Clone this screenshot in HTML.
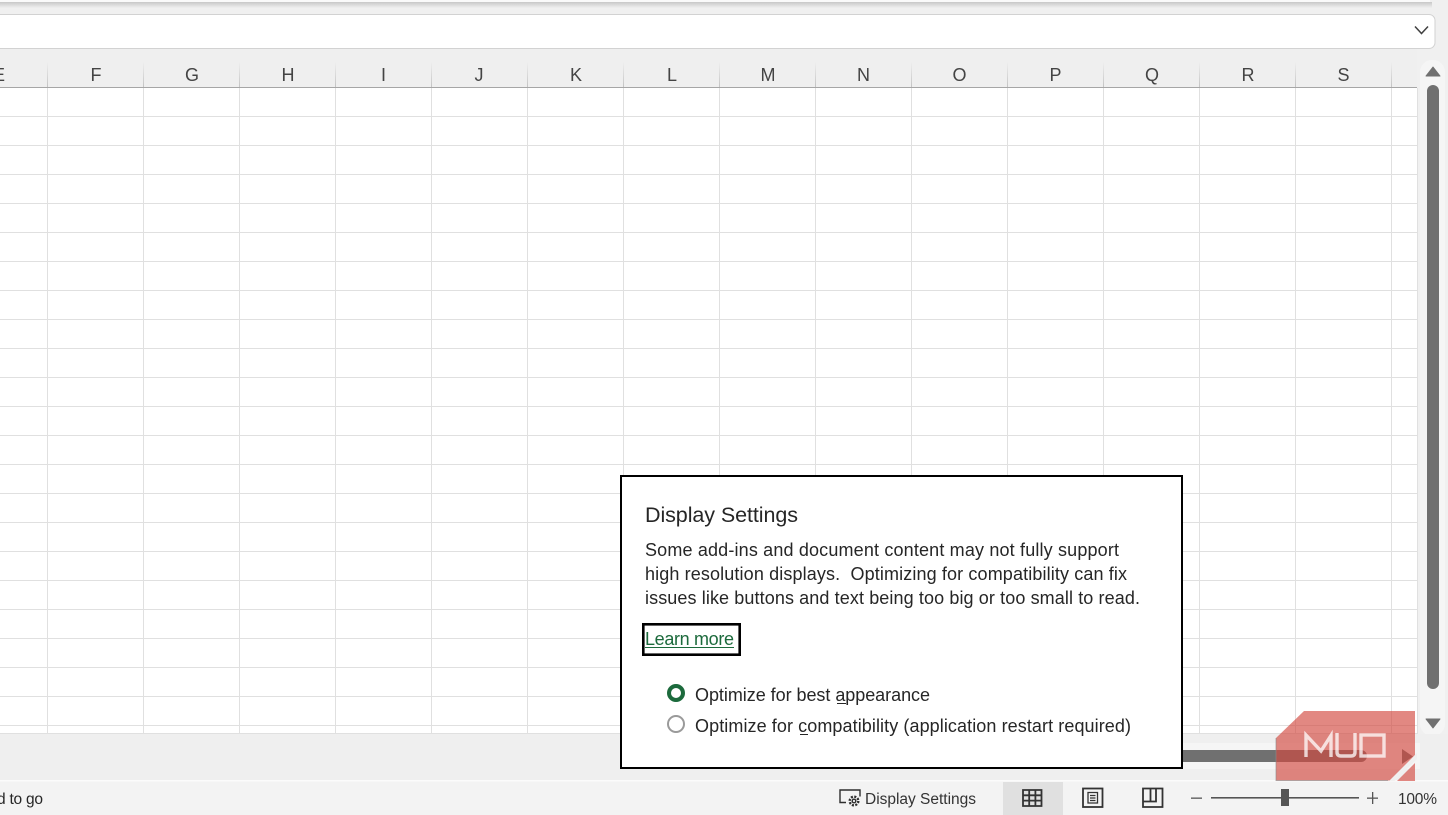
<!DOCTYPE html>
<html><head><meta charset="utf-8"><style>
html,body{margin:0;padding:0;background:#f0f0f0}
svg{display:block}
text{font-family:"Liberation Sans","DejaVu Sans",sans-serif;fill:#262626}
</style></head><body>
<svg width="1448" height="815" viewBox="0 0 1448 815" xmlns="http://www.w3.org/2000/svg">
<defs>
<linearGradient id="sh" x1="0" y1="0" x2="0" y2="1"><stop offset="0" stop-color="#c8c8c8"/><stop offset="1" stop-color="#f0f0f0"/></linearGradient>
<linearGradient id="sep" x1="0" y1="0" x2="0" y2="1"><stop offset="0" stop-color="#efefef"/><stop offset="1" stop-color="#c4c4c4"/></linearGradient>
</defs>
<rect width="1448" height="815" fill="#f0f0f0"/>
<!-- top -->
<rect x="0" y="0" width="1430" height="2" fill="#fafafa"/>
<rect x="0" y="2" width="1432" height="6" fill="url(#sh)"/>
<!-- formula bar -->
<rect x="-20" y="14.5" width="1455" height="34" rx="6" fill="#fff" stroke="#d2d2d2"/>
<path d="M1415 26.500l6.500 7 6.500-7" fill="none" stroke="#404040" stroke-width="1.500"/>
<!-- header -->
<rect x="0" y="49" width="1417" height="38" fill="#efefef"/>
<g fill="url(#sep)">
<rect x="47" y="62" width="1" height="25"/><rect x="143" y="62" width="1" height="25"/><rect x="239" y="62" width="1" height="25"/><rect x="335" y="62" width="1" height="25"/><rect x="431" y="62" width="1" height="25"/><rect x="527" y="62" width="1" height="25"/><rect x="623" y="62" width="1" height="25"/><rect x="719" y="62" width="1" height="25"/><rect x="815" y="62" width="1" height="25"/><rect x="911" y="62" width="1" height="25"/><rect x="1007" y="62" width="1" height="25"/><rect x="1103" y="62" width="1" height="25"/><rect x="1199" y="62" width="1" height="25"/><rect x="1295" y="62" width="1" height="25"/><rect x="1391" y="62" width="1" height="25"/>
</g>
<g font-size="18" text-anchor="middle">
<text x="-1" y="81" style="fill:#444">E</text><text x="96" y="81" style="fill:#444">F</text><text x="192" y="81" style="fill:#444">G</text><text x="288" y="81" style="fill:#444">H</text><text x="383.500" y="81" style="fill:#444">I</text><text x="479" y="81" style="fill:#444">J</text><text x="576" y="81" style="fill:#444">K</text><text x="672" y="81" style="fill:#444">L</text><text x="768" y="81" style="fill:#444">M</text><text x="863.500" y="81" style="fill:#444">N</text><text x="959.500" y="81" style="fill:#444">O</text><text x="1055.500" y="81" style="fill:#444">P</text><text x="1152" y="81" style="fill:#444">Q</text><text x="1248" y="81" style="fill:#444">R</text><text x="1343.500" y="81" style="fill:#444">S</text>
</g>
<!-- grid -->
<rect x="0" y="88" width="1417" height="645" fill="#fff"/>
<rect x="0" y="87" width="1417" height="1" fill="#a6a6a6"/>
<g fill="#e0e0e0">
<rect x="47" y="88" width="1" height="645"/><rect x="143" y="88" width="1" height="645"/><rect x="239" y="88" width="1" height="645"/><rect x="335" y="88" width="1" height="645"/><rect x="431" y="88" width="1" height="645"/><rect x="527" y="88" width="1" height="645"/><rect x="623" y="88" width="1" height="645"/><rect x="719" y="88" width="1" height="645"/><rect x="815" y="88" width="1" height="645"/><rect x="911" y="88" width="1" height="645"/><rect x="1007" y="88" width="1" height="645"/><rect x="1103" y="88" width="1" height="645"/><rect x="1199" y="88" width="1" height="645"/><rect x="1295" y="88" width="1" height="645"/><rect x="1391" y="88" width="1" height="645"/>
<rect y="116" width="1417" height="1"/><rect y="145" width="1417" height="1"/><rect y="174" width="1417" height="1"/><rect y="203" width="1417" height="1"/><rect y="232" width="1417" height="1"/><rect y="261" width="1417" height="1"/><rect y="290" width="1417" height="1"/><rect y="319" width="1417" height="1"/><rect y="348" width="1417" height="1"/><rect y="377" width="1417" height="1"/><rect y="406" width="1417" height="1"/><rect y="435" width="1417" height="1"/><rect y="464" width="1417" height="1"/><rect y="493" width="1417" height="1"/><rect y="522" width="1417" height="1"/><rect y="551" width="1417" height="1"/><rect y="580" width="1417" height="1"/><rect y="609" width="1417" height="1"/><rect y="638" width="1417" height="1"/><rect y="667" width="1417" height="1"/><rect y="696" width="1417" height="1"/><rect y="725" width="1417" height="1"/>
<rect y="733" width="1417" height="1"/>
<rect x="1417" y="88" width="1" height="646"/>
</g>
<!-- v scrollbar -->
<rect x="1420" y="60" width="25" height="676" rx="12" fill="#f5f5f5"/>
<path d="M1433 67l7 9h-14z" fill="#707070" stroke="#707070" stroke-linejoin="round"/>
<rect x="1427" y="85" width="12" height="604" rx="6" fill="#707070"/>
<path d="M1426 719h14l-7 9z" fill="#707070" stroke="#707070" stroke-linejoin="round"/>
<!-- bottom bar -->
<rect x="0" y="734" width="1448" height="46" fill="#efefef"/>
<rect x="1183" y="743" width="237" height="26" fill="#f5f5f5"/>
<rect x="1150" y="750" width="217" height="12" rx="6" fill="#707070"/>
<path d="M1402 749l11 7.500-11 7.500z" fill="#707070"/>
<rect x="0" y="780" width="1448" height="1.500" fill="#fbfbfb"/>
<rect x="0" y="781.500" width="1448" height="33.500" fill="#f3f3f3"/>
<text x="-3" y="804" font-size="15.500" textLength="46" lengthAdjust="spacing">d to go</text>
<!-- display settings -->
<g fill="none" stroke="#2e2e2e" stroke-width="1.400">
<path d="M846 802.500h-6v-12.500h20v6.500"/>
<circle cx="854" cy="801" r="1.800"/>
<circle cx="854" cy="801" r="4.300" stroke-width="2.400" stroke-dasharray="2 1.400"/>
</g>
<text x="865" y="804" font-size="15.500" textLength="111" lengthAdjust="spacing" style="fill:#333">Display Settings</text>
<rect x="1003" y="782" width="60" height="33" fill="#e0e0e0"/>
<g fill="none" stroke="#333" stroke-width="1.800">
<path d="M1023 790h18.500v16h-18.500zM1029.200 790v16M1035.400 790v16M1023 795.300h18.500M1023 800.600h18.500"/>
<rect x="1083" y="788.500" width="19.500" height="18.500"/>
<path d="M1088 792.500h9.500v10.500h-9.500zM1090 795.500h5.500M1090 798h5.500M1090 800.500h5.500" stroke-width="1.300"/>
<path d="M1143 788.500h19.500v18.500h-19.500zM1143 801.500h7.500v-13M1150.500 801.500h5.500v-13" />
</g>
<!-- zoom -->
<rect x="1191" y="797.500" width="11" height="1.300" fill="#555"/>
<rect x="1211" y="797" width="148" height="1.600" fill="#555"/>
<rect x="1281" y="789" width="8" height="17" fill="#555"/>
<rect x="1367" y="797.500" width="11" height="1.300" fill="#555"/>
<rect x="1372" y="792" width="1.300" height="12" fill="#555"/>
<text x="1398" y="804" font-size="15.500" textLength="39" lengthAdjust="spacing" style="fill:#333">100%</text>
<!-- dialog -->
<rect x="621" y="476" width="561" height="292" fill="#fff" stroke="#000" stroke-width="2"/>
<text x="645" y="522" font-size="21.500" textLength="153" lengthAdjust="spacing">Display Settings</text>
<g font-size="18">
<text x="645" y="556" textLength="474" lengthAdjust="spacing">Some add-ins and document content may not fully support</text>
<text x="645" y="580" textLength="482" lengthAdjust="spacing" xml:space="preserve">high resolution displays.  Optimizing for compatibility can fix</text>
<text x="645" y="604" textLength="495" lengthAdjust="spacing">issues like buttons and text being too big or too small to read.</text>
<text x="645" y="645" textLength="89" lengthAdjust="spacing" style="fill:#1c6a3c">Learn more</text>
<text x="695" y="701" textLength="235" lengthAdjust="spacing">Optimize for best appearance</text>
<text x="695" y="732" textLength="436" lengthAdjust="spacing">Optimize for compatibility (application restart required)</text>
</g>
<rect x="645" y="647" width="89" height="1" fill="#1c6a3c"/>
<rect x="837" y="703" width="9" height="1" fill="#262626"/>
<rect x="800" y="734" width="8" height="1" fill="#262626"/>
<rect x="643.300" y="624.300" width="96.400" height="30.400" fill="none" stroke="#000" stroke-width="2.600"/>
<circle cx="676" cy="693" r="7" fill="#fff" stroke="#1c6a3c" stroke-width="4"/>
<circle cx="676" cy="724" r="8" fill="#fff" stroke="#9a9a9a" stroke-width="2"/>
<!-- MUO badge -->
<path d="M1304 711H1415V755L1391 780.500H1276V738Z" fill="#d2483f" fill-opacity=".65"/>
<path d="M1417 753L1389 781H1394.500L1417 759Z" fill="#f0f0f0"/>
<path d="M1415 763V781H1397Z" fill="#d2483f" fill-opacity=".65"/>
<path d="M1276 738V780.500H1388" fill="none" stroke="#888" stroke-opacity=".6" stroke-width="1"/>
<g fill="none" stroke="#fff" stroke-opacity=".75" stroke-width="3.400">
<path d="M1306 757V735L1321 751L1331 735.500V757"/>
<path d="M1337 733V752Q1337 756 1341 756H1351Q1355 756 1355 752V733"/>
<rect x="1361" y="735" width="23" height="21"/>
</g>
</svg>
</body></html>
